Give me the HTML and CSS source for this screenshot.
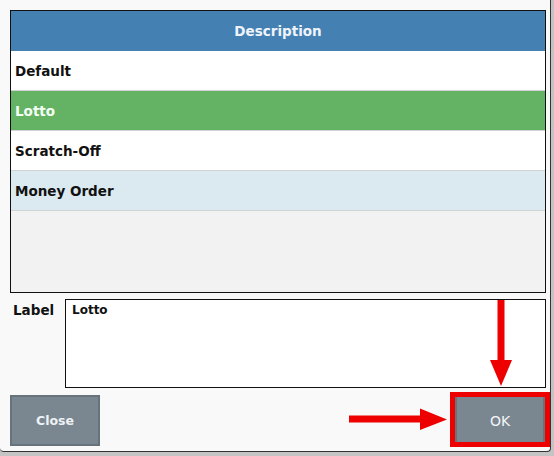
FILE: index.html
```html
<!DOCTYPE html>
<html>
<head>
<meta charset="utf-8">
<link rel="stylesheet" href="styles.css">
</head>
<body>
<div class="screen">
  <div class="dialog">
    <div class="table">
      <div class="thead">Description</div>
      <div class="row">Default</div>
      <div class="row selected">Lotto</div>
      <div class="row">Scratch-Off</div>
      <div class="row alt">Money Order</div>
    </div>
    <div class="label-row">
      <div class="label">Label</div>
      <div class="field">Lotto</div>
    </div>
    <div class="buttons">
      <button class="btn close">Close</button>
      <button class="btn ok">OK</button>
    </div>
  </div>
  <svg class="annot" width="554" height="456" viewBox="0 0 554 456">
    <rect x="452.5" y="394.5" width="95" height="50" fill="none" stroke="#ee0000" stroke-width="5"/>
    <rect x="497.5" y="300" width="7" height="61" fill="#ee0000"/>
    <polygon points="490,360 512,360 501,386" fill="#ee0000"/>
    <rect x="349" y="415.5" width="73" height="7" fill="#ee0000"/>
    <polygon points="420,408.5 420,430 447,419.5" fill="#ee0000"/>
  </svg>
</div>
</body>
</html>
```
FILE: styles.css
```css
html, body {
  margin: 0;
  padding: 0;
}
body {
  background: #c4c4c4;
  font-family: "DejaVu Sans", Verdana, sans-serif;
}
.screen {
  position: relative;
  width: 554px;
  height: 456px;
  overflow: hidden;
}
.dialog {
  width: 551px;
  height: 452px;
  box-sizing: border-box;
  background: #f9f9f9;
  border-right: 1px solid #333;
  border-bottom: 1px solid #333;
  border-bottom-right-radius: 4px;
  border-bottom-left-radius: 4px;
  padding: 10px 4px 0 10px;
  display: flex;
  flex-direction: column;
}
.table {
  width: 536px;
  height: 283px;
  box-sizing: border-box;
  border: 1px solid #111;
  background: #f2f2f2;
  display: flex;
  flex-direction: column;
}
.thead {
  height: 40px;
  box-sizing: border-box;
  padding-top: 1px;
  line-height: 39px;
  background: #4580b3;
  color: #eef4fa;
  text-align: center;
  font-weight: bold;
  font-size: 13.5px;
}
.row {
  height: 40px;
  box-sizing: border-box;
  border-bottom: 1px solid #cfd3d4;
  background: #ffffff;
  padding-left: 4px;
  padding-top: 1px;
  line-height: 38px;
  font-weight: bold;
  font-size: 13.5px;
  color: #111;
}
.row.selected {
  background: #64b264;
  color: #f4fff4;
}
.row.alt {
  background: #dbeaf0;
}
.label-row {
  margin-top: 6px;
  display: flex;
}
.label {
  width: 52px;
  padding-left: 3px;
  padding-top: 3px;
  font-weight: bold;
  font-size: 13.5px;
  color: #111;
}
.field {
  width: 481px;
  height: 89px;
  box-sizing: border-box;
  border: 1px solid #111;
  background: #fff;
  padding: 3px 6px;
  font-weight: bold;
  font-size: 12px;
  color: #111;
}
.buttons {
  margin-top: 7px;
  display: flex;
  justify-content: space-between;
  padding-right: 1px;
}
.btn {
  width: 90px;
  height: 51px;
  box-sizing: border-box;
  background: #7a8791;
  border: 2px solid #66737b;
  color: #eef2f4;
  font-family: "DejaVu Sans", Verdana, sans-serif;
  font-size: 12.5px;
  font-weight: bold;
  padding: 0;
}
.btn.ok {
  font-weight: normal;
  font-size: 14px;
  color: #f4f6f8;
}
.annot {
  position: absolute;
  left: 0;
  top: 0;
}
```
